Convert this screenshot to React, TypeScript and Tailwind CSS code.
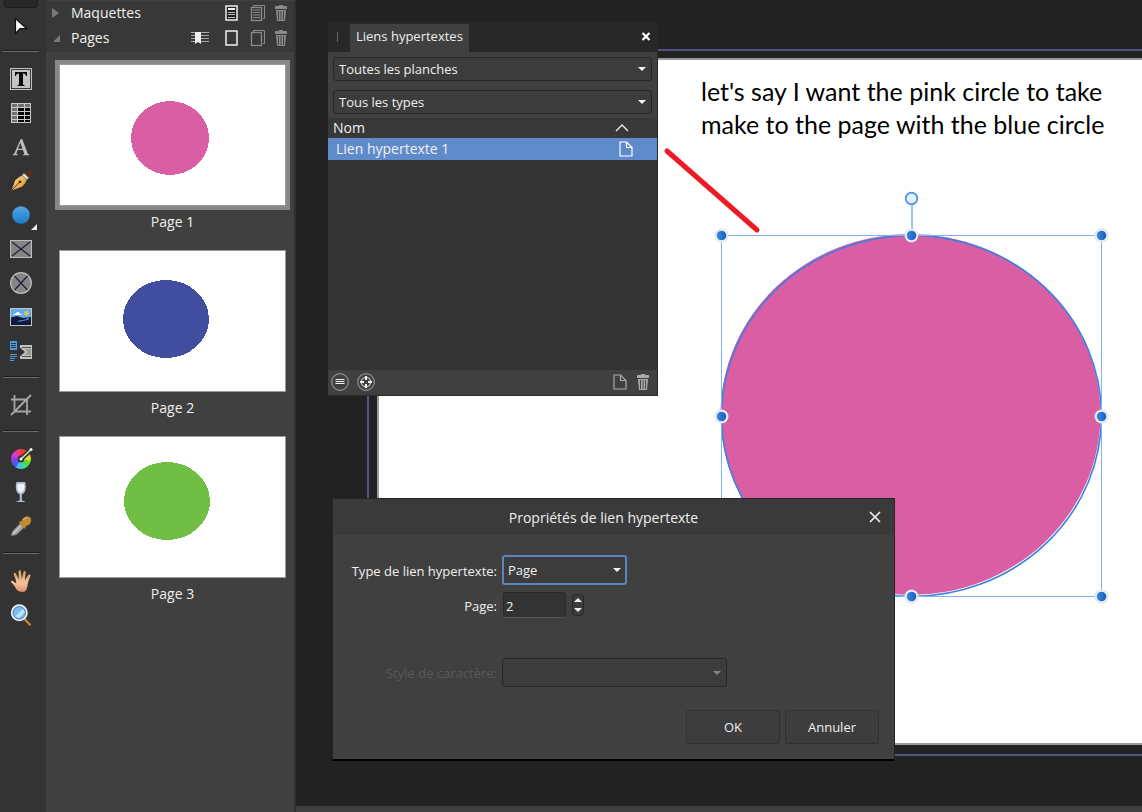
import { useState, type ReactNode } from "react";

const THUMBS = [
  { id: 1, name: "Page 1", color: "#d95ea4", cx: 110, cy: 73, rx: 39, ry: 37 },
  { id: 2, name: "Page 2", color: "#414e9f", cx: 106, cy: 68, rx: 43, ry: 39 },
  { id: 3, name: "Page 3", color: "#70bf44", cx: 107, cy: 64, rx: 43, ry: 39 },
];

// corners and edge midpoints of the selection box, in canvas units
const HANDLES = [
  [425.5, 235.5], [615.5, 235.5], [805.5, 235.5],
  [425.5, 416.5], [805.5, 416.5],
  [425.5, 596.5], [615.5, 596.5], [805.5, 596.5],
];

const TOOLS: ({ name: string; icon: ReactNode } | null)[] = [
  { name: "Déplacement", icon: <path d="M6.500 5.500v15l4.500-4.800h6.800z" fill="#fff" stroke="#111" strokeWidth="1.200" /> },
  null,
  {
    name: "Texte cadre",
    icon: (
      <>
        <rect x="1.500" y="1.500" width="21" height="21" fill="#3a3a3a" stroke="#c4c4c4" />
        <rect x="3" y="3" width="18" height="18" fill="#c4c4c4" />
        <path d="M6 5h12v4h-1c-.4-2-1-2.600-3-2.600V17c0 .8.500 1 1.500 1v1h-7v-1c1 0 1.500-.2 1.500-1V6.400c-2 0-2.600.6-3 2.600H6z" fill="#0a0a0a" />
      </>
    ),
  },
  {
    name: "Tableau",
    icon: (
      <>
        <rect x="2" y="2" width="20" height="20" fill="#c9c9c9" />
        {[3, 7, 11, 15, 19].map(y => (
          <g key={y}>
            <rect x="3" y={y} width="5" height={y > 15 ? 2 : 3} fill="#707070" />
            <rect x="9" y={y} width="6" height={y > 15 ? 2 : 3} fill={y === 3 ? "#707070" : "#060606"} />
            <rect x="16" y={y} width="5" height={y > 15 ? 2 : 3} fill={y === 3 ? "#707070" : "#060606"} />
          </g>
        ))}
      </>
    ),
  },
  {
    name: "Texte artistique",
    icon: <path d="M11.700 4h1.500l5.400 14.300c.3.800.7 1.100 1.700 1.200v.8h-6.500v-.8c1.300 0 1.600-.3 1.300-1.200l-1.200-3.300H8.600l-1 2.700c-.4 1.200 0 1.700 1.400 1.800v.8H3.700v-.8c1-.1 1.500-.6 2-1.900zM9 13.800h4.500l-2.200-6z" fill="#bdbdbd" />,
  },
  {
    name: "Plume",
    icon: (
      <>
        <defs>
          <linearGradient id="nib" x1="0" x2="1" y1="0" y2="1"><stop offset="0" stopColor="#ffe49a" /><stop offset="1" stopColor="#e08a1e" /></linearGradient>
        </defs>
        <path d="M2.500 21.500l3.700-10.300c2-1.200 4.300-3.700 7-4.700l4.300 4.300c-.6 3-2.500 5-4.700 7z" fill="url(#nib)" />
        <path d="M3 21l7.500-8" stroke="#5d3d0a" strokeWidth="1" />
        <circle cx="11" cy="12.800" r="1.400" fill="#3b2706" />
        <path d="M13 6.500l2-2.500 5 4.700-2.300 2.300z" fill="#d8d8d8" stroke="#555" strokeWidth=".6" />
        <path d="M16 4c1.500-2 4-2.500 6.700-2.300.3 2.500-.4 4.700-2.200 6.600z" fill="#61291b" />
      </>
    ),
  },
  {
    name: "Ellipse",
    icon: (
      <>
        <defs>
          <linearGradient id="ball" x2="0" y2="1"><stop offset="0" stopColor="#50a7e7" /><stop offset="1" stopColor="#1e7cc6" /></linearGradient>
        </defs>
        <circle cx="12" cy="12" r="8.800" fill="url(#ball)" />
      </>
    ),
  },
  {
    name: "Cadre rectangle",
    icon: (
      <>
        <rect x="1.500" y="3.500" width="21" height="17" fill="#858585" stroke="#bcbcbc" />
        <path d="M3 5l18 14M21 5L3 19" stroke="#1b1f3d" strokeWidth="1.200" />
      </>
    ),
  },
  {
    name: "Cadre ellipse",
    icon: (
      <>
        <circle cx="12" cy="12" r="10.300" fill="#858585" stroke="#bcbcbc" strokeWidth="1.300" />
        <path d="M5.500 5l13 14M18.500 5l-13 14" stroke="#1b1f3d" strokeWidth="1.200" />
      </>
    ),
  },
  {
    name: "Placer image",
    icon: (
      <>
        <rect x="1.500" y="3.500" width="21" height="17" fill="#5cb0f2" stroke="#c4c4c4" />
        <path d="M4 10c1-1.500 2-1.300 3-1.500.5-2 3-2 3.500 0 1.500 0 2 .5 2.500 1.500z" fill="#fff" />
        <circle cx="17.500" cy="8.300" r="2.300" fill="#f6bd2f" />
        <path d="M2 12.500l6-1.500 6 2 8-1v8H2z" fill="#141a38" />
        <path d="M13 12.500c3 .3 6 .8 5 1.500-2 .8-7 .8-10 2.500l3 .2c2-1.200 8-1.200 9-2.700 0-1-3-1.500-7-1.500z" fill="#4c9be0" />
      </>
    ),
  },
  {
    name: "Habillage",
    icon: (
      <>
        <rect x="1" y="2" width="7" height="9" fill="#4a9de0" />
        <path d="M2 4.500h5M2 6.500h5M2 8.500h5" stroke="#22384c" />
        <path d="M1 15.500h7M1 17.500h7M1 19.500h5M1 21.500h4" stroke="#4a9de0" />
        <path d="M11 6h12v14H11v-2.500l5-4.500-5-4.500z" fill="#c2c2be" />
        <path d="M13 8.500h9M13 17.500h9" stroke="#50504e" />
        <path d="M16 10h6v6h-6l2.500-3z" fill="#969694" />
      </>
    ),
  },
  null,
  { name: "Rognage", icon: <path d="M2 6.500h16V22M5.500 2v16.500H22M2 22L22 2" fill="none" stroke="#a6a6a6" strokeWidth="1.800" /> },
  null,
  {
    name: "Remplissage",
    icon: (
      <>
        {["#ff3b26", "#ff8a1c", "#d9e021", "#62d836", "#3ee08a", "#48c4f0", "#4a5cf2", "#8a40e8", "#d43ad8", "#f4397c"].map((c, i) => (
          <circle key={c} cx="12" cy="12" r="6.500" fill="none" stroke={c} strokeWidth="7" strokeDasharray="4.300 37" transform={`rotate(${i * 36 - 95} 12 12)`} />
        ))}
        <path d="M12 12L22 2.500" stroke="#333" strokeWidth="4.500" />
        <circle cx="12" cy="12" r="3.400" fill="#333" />
        <path d="M12 12L22 2.500" stroke="#eee" strokeWidth="1.200" />
        <circle cx="12" cy="12" r="1.500" fill="#fff" />
        <circle cx="22" cy="2.500" r="1.500" fill="#fff" />
      </>
    ),
  },
  {
    name: "Transparence",
    icon: (
      <>
        <path d="M7.500 1h8.600c1.500 6 .6 10.800-3.300 12.500v6c1.500.3 3 .6 3.500 1.500H7.200c.6-.9 2-1.200 3.600-1.500v-6C7 11.800 6 7 7.500 1z" fill="#b4bed8" />
        <path d="M8.500 3h6.500c.8 4-.2 8-3.200 8.500C8.500 11 7.900 7 8.500 3z" fill="#eef2fa" />
      </>
    ),
  },
  {
    name: "Pipette",
    icon: (
      <>
        <path d="M2 21c.5-3 1.500-5 3-6.500l6-6 4 4-6 6C7 20 5 20.500 2 21z" fill="#a2a2a2" stroke="#666" strokeWidth=".5" />
        <path d="M4 19l8-8.500" stroke="#e4e4e4" />
        <path d="M9.500 7l3-1c1-3 3.500-5 7-4.500 2.500.5 3 3 2.500 5-.6 2.500-2.500 4-5 4.500l-1 3z" fill="#c08a2c" />
        <path d="M14 5c1-1.500 2.500-2.500 4.500-2.300" stroke="#eec069" fill="none" />
      </>
    ),
  },
  null,
  {
    name: "Main",
    icon: (
      <>
        <defs>
          <linearGradient id="skin" x2="0" y2="1"><stop offset="0" stopColor="#d9a05a" /><stop offset=".6" stopColor="#f3c29d" /><stop offset="1" stopColor="#e58f6a" /></linearGradient>
        </defs>
        <path d="M7.500 20.500C6 17.500 4 15 1.800 12.800c.3-1.300 2-1.200 3 0l2.500 1.700c0-3.500-1.800-6.500-2.600-9.800.2-1.300 1.700-1.200 2.200 0L9.700 10.500 9.600 2.300c.5-1.400 2-1.300 2.300 0l.9 8 1.800-7.500c.6-1.200 2-.9 2.200.3l-1 8.300 3.700-5.600c.9-.9 2.200-.2 2 .9-1.200 3-2.600 6.300-2.900 9.300-.3 2.500-1 5-2.800 6.400-2.500.9-6 .6-8.300-1.900z" fill="url(#skin)" />
      </>
    ),
  },
  {
    name: "Zoom",
    icon: (
      <>
        <path d="M16 16.500l4.800 5" stroke="#c9833f" strokeWidth="2.400" strokeLinecap="round" />
        <circle cx="10.300" cy="9.800" r="7.600" fill="#79bdf3" stroke="#f0f0f0" strokeWidth="1.800" />
        <circle cx="10.300" cy="9.800" r="6.200" fill="none" stroke="#3a78b4" strokeWidth=".8" />
        <path d="M6 13.500l8-7.500 1.600 3.300-5.300 5.700z" fill="#c5e4fc" />
      </>
    ),
  },
];

function Trash({ className = "text-[#8a8a8a]" }: { className?: string }) {
  return (
    <svg viewBox="0 0 12 16" className={`h-4 w-3 ${className}`} fill="currentColor" aria-hidden="true">
      <path d="M4 0h4v1h3c.6 0 1 .4 1 1v2H0V2c0-.6.4-1 1-1h3z" />
      <path d="M1 5h10l-1 11H2z" />
      <path d="M3.500 6v9M6 6v9M8.500 6v9" stroke="#3c3c3c" strokeWidth=".9" />
    </svg>
  );
}

function PageIcon({ lines, className }: { lines?: boolean; className: string }) {
  return (
    <svg viewBox="0 0 13 16" className={`h-4 w-[13px] ${className}`} fill="none" stroke="currentColor" aria-hidden="true">
      <rect x="1" y="1" width="11" height="14" strokeWidth="1.500" fill={lines ? "#222" : "none"} />
      {lines && <path d="M3 4h7" strokeWidth="2" />}
      {lines && <path d="M3 7.500h7M3 9.500h7M3 12.500h7" strokeOpacity=".75" />}
    </svg>
  );
}

function CopyIcon({ lines }: { lines?: boolean }) {
  return (
    <svg viewBox="0 0 16 18" className="h-[18px] w-4 text-[#8a8a8a]" fill="none" stroke="currentColor" aria-hidden="true">
      <path d="M3.500 3V1.500h11v13H13" />
      <rect x="1.500" y="3.500" width="10" height="13" strokeWidth="1.300" />
      {lines && <path d="M3 6h7M3 8.500h7M3 11h7M3 13.500h7" />}
    </svg>
  );
}

function DocIcon({ className }: { className: string }) {
  return (
    <svg viewBox="0 0 14 16" className={`h-4 w-[14px] ${className}`} fill="none" stroke="currentColor" strokeWidth="1.200" aria-hidden="true">
      <path d="M1 1h6.500L13 6.500V15H1z" />
      <path d="M7.500 1v5.500H13" />
    </svg>
  );
}

function Dropdown({ id, label, options, className, arrow = "text-gray-100", disabled }: {
  id: string; label?: string; options: string[]; className: string; arrow?: string; disabled?: boolean;
}) {
  return (
    <div className="relative">
      <select id={id} aria-label={label} disabled={disabled}
        className={`block w-full appearance-none rounded-[3px] bg-[#3c3c3c] pt-px text-[13px] text-[#f0f0f0] outline-none ${className}`}>
        {options.map(o => <option key={o}>{o}</option>)}
      </select>
      <svg viewBox="0 0 8 4" className={`pointer-events-none absolute inset-y-0 right-[6px] my-auto h-1 w-2 ${arrow}`} fill="currentColor" aria-hidden="true">
        <path d="M0 0h8L4 4z" />
      </svg>
    </div>
  );
}

function Toolbar() {
  return (
    <nav aria-label="Outils" className="flex w-[46px] shrink-0 flex-col bg-[#333]">
      <div className="ml-1 h-2 w-[34px] rounded-b border border-t-0 border-[#1c1c1c] bg-[#282828]" />
      {TOOLS.map((t, i) => t ? (
        <button key={t.name} aria-label={t.name} className="relative flex h-[34px] w-[42px] shrink-0 items-center justify-center">
          <svg viewBox="0 0 24 24" className="size-6" fill="none" aria-hidden="true">{t.icon}</svg>
          {t.name === "Ellipse" && (
            <svg viewBox="0 0 6 6" className="absolute right-[5px] bottom-[2px] size-[6px]" aria-hidden="true"><path d="M6 0v6H0z" fill="#eee" /></svg>
          )}
        </button>
      ) : (
        <hr key={i} className="mx-[3px] mt-2 mb-[10px] h-[2px] w-9 shrink-0 border-t border-b border-t-[#1e1e1e] border-b-[#6a6a6a]" />
      ))}
    </nav>
  );
}

function PagesPanel() {
  const [current, setCurrent] = useState(1);

  return (
    <aside className="w-[250px] shrink-0 border-r-2 border-[#303030] bg-[#404040]">
      <header className="border-t border-[#404040] bg-[#383838] pb-[2px] text-sm text-[#f0f0f0]">
        <div className="flex h-6 items-center pr-[7px] pl-1">
          <svg viewBox="0 0 10 10" className="size-[10px]" fill="#7a7a7a" aria-hidden="true"><path d="M2 0l7 5-7 5z" /></svg>
          <h2 className="ml-[11px] flex-1">Maquettes</h2>
          <button aria-label="Ajouter une maquette"><PageIcon lines className="text-[#f0f0f0]" /></button>
          <button aria-label="Dupliquer la maquette" className="ml-3"><CopyIcon lines /></button>
          <button aria-label="Supprimer la maquette" className="ml-[9px]"><Trash /></button>
        </div>
        <div className="flex h-[25px] items-center pr-[7px] pl-1">
          <svg viewBox="0 0 10 10" className="size-[10px]" fill="#7a7a7a" aria-hidden="true"><path d="M10 2v7H3z" /></svg>
          <h2 className="ml-[11px] flex-1">Pages</h2>
          <button aria-label="Sections">
            <svg viewBox="0 0 18 14" className="h-[14px] w-[18px]" aria-hidden="true">
              <path d="M0 1.500h18M0 4.500h18M0 7.500h18M0 10.500h18" stroke="#a8a8a8" />
              <path d="M4 1h6v12l-3-2-3 2z" fill="#eee" />
            </svg>
          </button>
          <button aria-label="Ajouter une page" className="ml-4"><PageIcon className="text-[#f0f0f0]" /></button>
          <button aria-label="Dupliquer la page" className="ml-3"><CopyIcon /></button>
          <button aria-label="Supprimer la page" className="ml-[9px]"><Trash /></button>
        </div>
      </header>
      <ul className="flex flex-col gap-3 pt-2 pr-1 pl-[9px]">
        {THUMBS.map(p => (
          <li key={p.id}>
            <button onClick={() => setCurrent(p.id)} className="block w-full text-sm text-[#f0f0f0]">
              <span className={`block p-1 ${current === p.id ? "bg-[#888]" : ""}`}>
                <svg viewBox="0 0 225 140" className="block w-full border border-[#999] bg-white" shapeRendering="crispEdges" aria-hidden="true">
                  <ellipse cx={p.cx} cy={p.cy} rx={p.rx} ry={p.ry} fill={p.color} />
                </svg>
              </span>
              <span className="block h-6 leading-6">{p.name}</span>
            </button>
          </li>
        ))}
      </ul>
    </aside>
  );
}

function Spread() {
  return (
    <>
      {/* bleed guide, then the page itself */}
      <div className="absolute top-[49px] -right-10 bottom-[50px] left-[71px] border-2 border-[#53538a]" />
      <div className="absolute top-[58px] -right-10 bottom-[61px] left-[81px] border-2 border-[#9a9a9a] bg-white" />
      <p className="absolute top-[75px] left-[405px] font-[Lato,sans-serif] text-[25px] leading-[33px] whitespace-nowrap text-black">
        let's say I want the pink circle to take<br />make to the page with the blue circle
      </p>
      <svg className="absolute inset-0 h-full w-full" fill="none" aria-hidden="true">
        <defs>
          <linearGradient id="knob"><stop offset="0" stopColor="#3d8ae0" /><stop offset="1" stopColor="#1560bd" /></linearGradient>
        </defs>
        <ellipse cx="614.500" cy="414.500" rx="190" ry="180.500" fill="#d95ea4" />
        <ellipse cx="615.500" cy="416" rx="190" ry="180.500" stroke="#3a82e0" strokeWidth="1.600" />
        <rect x="425.500" y="235.500" width="380" height="361" stroke="#7fb2ee" />
        <path d="M616 205v25" stroke="#9cc5f3" strokeWidth="2" />
        <circle cx="615.500" cy="198.500" r="5.800" fill="#e3f0fe" stroke="#4a92e6" strokeWidth="1.800" />
        {HANDLES.map(([x, y]) => (
          <g key={`${x}-${y}`}>
            <circle cx={x} cy={y} r="7" fill="#d8dade" />
            <circle cx={x} cy={y} r="6.200" fill="#f4f4f4" />
            <circle cx={x} cy={y} r="4.800" fill="url(#knob)" />
          </g>
        ))}
        <path d="M371 151l90 79" stroke="#ed1c24" strokeWidth="5" strokeLinecap="round" />
      </svg>
    </>
  );
}

function LinksPanel() {
  return (
    <section className="absolute top-[22px] left-8 flex h-[374px] w-[330px] flex-col border-r border-b border-[#282828] bg-[#333] text-[#f0f0f0]">
      <header className="flex h-[30px] shrink-0 items-end bg-[#282828] pr-[6px]">
        <span className="mr-3 mb-[10px] ml-[9px] h-[10px] w-px bg-[#666]" />
        <h2 className="flex h-7 items-center bg-[#404040] px-[6px] pb-[3px] text-[13px]">Liens hypertextes</h2>
        <button aria-label="Fermer" className="mb-[11px] ml-auto">
          <svg viewBox="0 0 10 9" className="h-[9px] w-[10px]" aria-hidden="true"><path d="M1.500 1l7 7M8.500 1l-7 7" stroke="#fff" strokeWidth="2.200" /></svg>
        </button>
      </header>
      <div className="flex flex-col gap-[9px] bg-[#404040] px-[5px] pt-[5px] pb-1">
        <Dropdown id="spreads" label="Planches" options={["Toutes les planches"]} className="h-6 border border-[#272727] px-[5px]" />
        <Dropdown id="types" label="Types" options={["Tous les types"]} className="h-6 border border-[#272727] px-[5px]" />
      </div>
      <div className="flex-1">
        <table className="w-full text-left text-sm">
          <thead>
            <tr className="h-5 bg-[#383838]">
              <th scope="col" className="p-0 pl-[5px] leading-5 font-normal">Nom</th>
              <th scope="col" aria-label="Tri" className="w-12 p-0">
                <svg viewBox="0 0 14 8" className="ml-[6px] h-2 w-[14px]" fill="none" aria-hidden="true"><path d="M1 7l6-6 6 6" stroke="#eee" strokeWidth="1.300" /></svg>
              </th>
            </tr>
          </thead>
          <tbody>
            <tr className="h-[22px] bg-[#608bcb]">
              <td className="p-0 pl-2 leading-[22px]">Lien hypertexte 1</td>
              <td className="p-0 pl-[10px]"><DocIcon className="text-white" /></td>
            </tr>
          </tbody>
        </table>
      </div>
      <footer className="flex h-[25px] shrink-0 items-center bg-[#404040] pr-2 pb-[2px] pl-[3px]">
        <button aria-label="Options">
          <svg viewBox="0 0 18 18" className="size-[18px]" fill="none" aria-hidden="true">
            <circle cx="9" cy="9" r="8.300" stroke="#909090" strokeWidth="1.200" />
            <path d="M4.500 6.500h9M4.500 8.500h9M4.500 10.500h9" stroke="#f0f0f0" strokeWidth="1.100" />
          </svg>
        </button>
        <button aria-label="Atteindre" className="ml-2">
          <svg viewBox="0 0 18 18" className="size-[18px]" fill="none" aria-hidden="true">
            <circle cx="9" cy="9" r="8.300" stroke="#909090" strokeWidth="1.200" />
            <circle cx="9" cy="9" r="4.700" stroke="#c8c8c8" strokeWidth="1.200" />
            <path d="M9 3v4M9 11v4M3 9h4M11 9h4" stroke="#f0f0f0" strokeWidth="2" />
          </svg>
        </button>
        <button aria-label="Nouveau lien" className="ml-auto"><DocIcon className="text-[#aaa]" /></button>
        <button aria-label="Supprimer le lien" className="ml-[10px]"><Trash className="text-[#aaa]" /></button>
      </footer>
    </section>
  );
}

function LinkDialog() {
  const [page, setPage] = useState(2);

  return (
    <section role="dialog" aria-labelledby="dialog-title"
      className="absolute top-[498px] left-9 w-[563px] border border-b-2 border-[#242424] border-b-black bg-[#404040] text-[13px] text-[#f0f0f0]">
      <header className="relative flex h-9 items-center justify-center bg-[#3a3a3a] pt-[2px] pr-5">
        <h2 id="dialog-title" className="text-sm">Propriétés de lien hypertexte</h2>
        <button aria-label="Fermer" className="absolute top-3 right-[13px]">
          <svg viewBox="0 0 12 12" className="size-3" aria-hidden="true"><path d="M1 1l10 10M11 1L1 11" stroke="#eee" strokeWidth="1.700" /></svg>
        </button>
      </header>
      <form className="px-[15px] pt-5 pb-[15px]" onSubmit={e => e.preventDefault()}>
        <div className="grid grid-cols-[149px_1fr] items-center gap-x-[5px]">
          <label htmlFor="link-type" className="pt-[3px] text-right whitespace-nowrap">Type de lien hypertexte:</label>
          <div className="w-[125px]">
            <Dropdown id="link-type" options={["Page"]} className="h-[30px] border-2 border-[#5b84c0] px-1" />
          </div>

          <label htmlFor="link-page" className="mt-[7px] pt-[3px] text-right">Page:</label>
          <div className="mt-[7px] flex items-center gap-[6px] pl-px">
            <input id="link-page" type="text" inputMode="numeric" value={page} onChange={e => setPage(Number(e.target.value) || 1)}
              className="h-[26px] w-[63px] rounded-[3px] border border-[#282828] border-b-[#555] bg-[#333] px-[2px] pt-[2px] outline-none" />
            <div className="flex h-[22px] w-3 flex-col rounded border border-[#262626] bg-[#3c3c3c]">
              <button type="button" aria-label="Plus" onClick={() => setPage(page + 1)} className="flex flex-1 items-center justify-center">
                <svg viewBox="0 0 8 4" className="h-1 w-2" aria-hidden="true"><path d="M0 4h8L4 0z" fill="#eee" /></svg>
              </button>
              <button type="button" aria-label="Moins" onClick={() => setPage(Math.max(1, page - 1))} className="flex flex-1 items-center justify-center">
                <svg viewBox="0 0 8 4" className="h-1 w-2" aria-hidden="true"><path d="M0 0h8L4 4z" fill="#eee" /></svg>
              </button>
            </div>
          </div>

          <label htmlFor="char-style" className="mt-10 pt-[3px] text-right text-[#585858]">Style de caractère:</label>
          <div className="mt-10 w-[225px]">
            <Dropdown id="char-style" options={[""]} className="h-[29px] border border-[#272727] px-1" arrow="text-[#858585]" disabled />
          </div>
        </div>
        <div className="mt-[23px] flex justify-end gap-[5px]">
          <button type="submit" className="h-[34px] w-[94px] rounded-[3px] border border-[#313131] bg-[#3d3d3d] pt-[2px]">OK</button>
          <button type="button" className="h-[34px] w-[94px] rounded-[3px] border border-[#313131] bg-[#3d3d3d] pt-[2px]">Annuler</button>
        </div>
      </form>
    </section>
  );
}

export default function App() {
  return (
    <div className="flex h-screen w-full overflow-hidden bg-[#222] font-['Open_Sans','Noto_Sans',sans-serif]">
      <Toolbar />
      <PagesPanel />
      <main className="relative min-w-0 flex-1 overflow-hidden border-b-[6px] border-[#404040]">
        <Spread />
        <LinksPanel />
        <LinkDialog />
      </main>
    </div>
  );
}
